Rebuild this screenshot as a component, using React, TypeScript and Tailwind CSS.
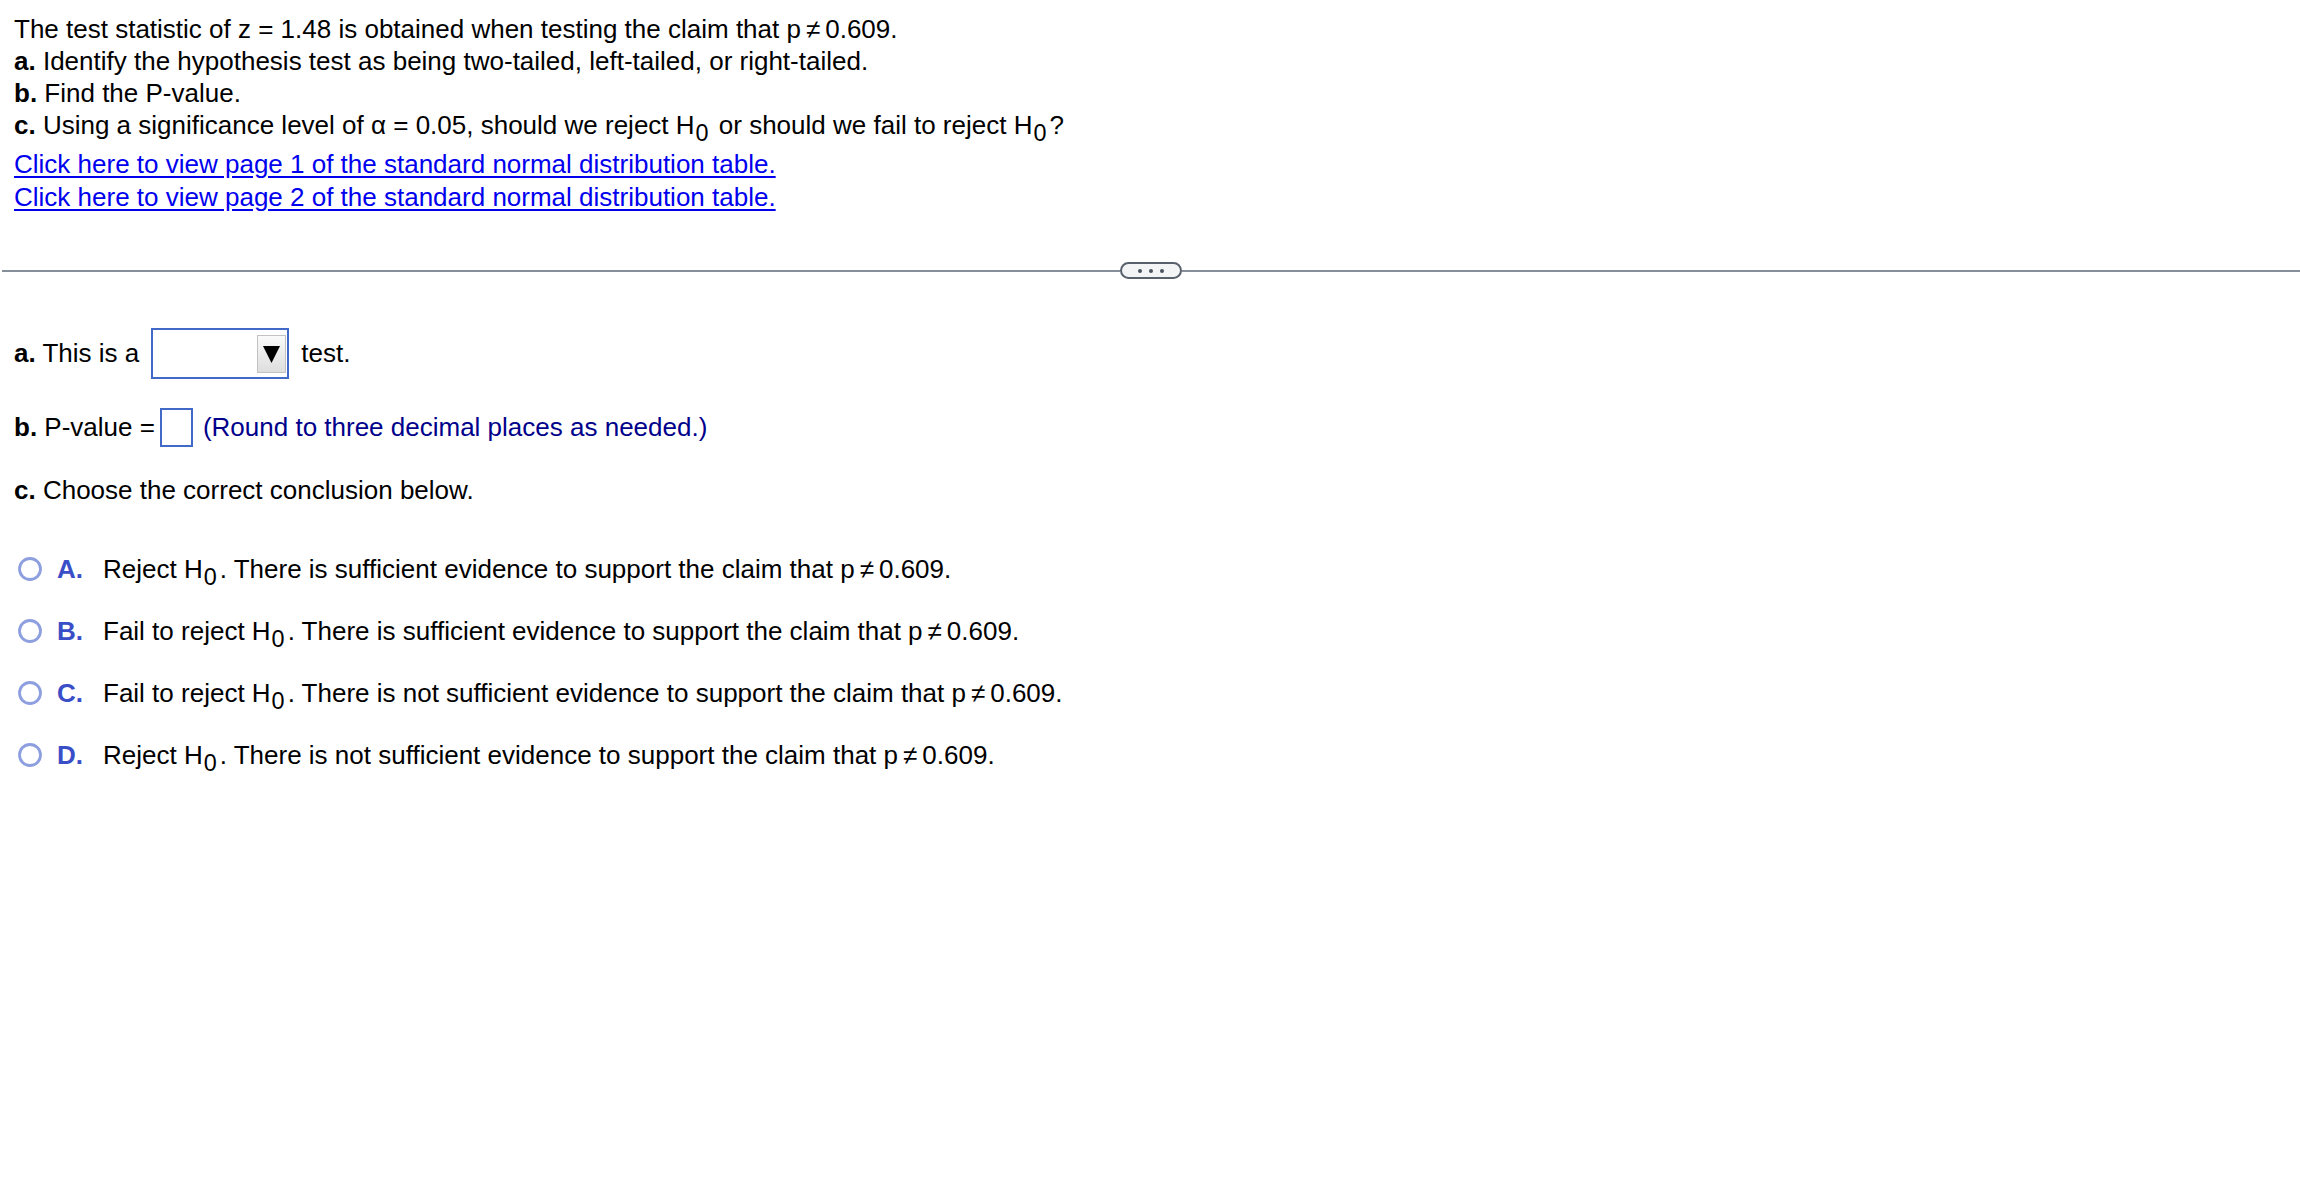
import React from 'react';

const font = { fontFamily: '"Liberation Sans", Arial, sans-serif' };

function H0() {
  return (
    <span>
      H<span className="relative top-[0.32em] ml-[1px] mr-[3px] text-[0.9em] leading-none">0</span>
    </span>
  );
}

function Neq() {
  return <span className="mx-[5px]">≠</span>;
}

function Radio() {
  return (
    <svg width="26" height="26" viewBox="0 0 26 26" className="shrink-0">
      <circle cx="13" cy="13" r="10.5" fill="#fff" stroke="#8e9fe0" strokeWidth="2.8" />
    </svg>
  );
}

const options = [
  { letter: 'A.', pre: 'Reject ', post: '. There is sufficient evidence to support the claim that p' },
  { letter: 'B.', pre: 'Fail to reject ', post: '. There is sufficient evidence to support the claim that p' },
  { letter: 'C.', pre: 'Fail to reject ', post: '. There is not sufficient evidence to support the claim that p' },
  { letter: 'D.', pre: 'Reject ', post: '. There is not sufficient evidence to support the claim that p' },
];

export default function App() {
  return (
    <div className="min-h-screen w-full bg-white text-black text-[26px]" style={font}>
      {/* Question text */}
      <div className="px-[14px] pt-[13px]">
        <div className="leading-[32px]">
          The test statistic of z = 1.48 is obtained when testing the claim that p<Neq />0.609.
        </div>
        <div className="leading-[32px]">
          <b>a.</b> Identify the hypothesis test as being two-tailed, left-tailed, or right-tailed.
        </div>
        <div className="leading-[32px]">
          <b>b.</b> Find the P-value.
        </div>
        <div className="leading-[32px]">
          <b>c.</b> Using a significance level of α = 0.05, should we reject <H0 /> or should we fail to reject <H0 />?
        </div>
        <div className="mt-[7px] flex flex-col items-start leading-[33px]">
          <a href="#" className="text-[#0000ee] underline underline-offset-[3px]">
            Click here to view page 1 of the standard normal distribution table.
          </a>
          <a href="#" className="text-[#0000ee] underline underline-offset-[3px]">
            Click here to view page 2 of the standard normal distribution table.
          </a>
        </div>
      </div>

      {/* Divider */}
      <div className="mt-[48px] flex items-center pl-[2px]">
        <div className="h-[2px] flex-1 bg-[#868e99]" />
        <div className="flex h-[17px] w-[62px] items-center justify-center gap-[7px] rounded-full border-2 border-[#58606c] bg-[#f3f4f6]">
          <span className="h-[4px] w-[4px] rounded-full bg-[#4b5260]" />
          <span className="h-[4px] w-[4px] rounded-full bg-[#4b5260]" />
          <span className="h-[4px] w-[4px] rounded-full bg-[#4b5260]" />
        </div>
        <div className="h-[2px] flex-1 bg-[#868e99]" />
      </div>

      {/* Answers */}
      <div className="px-[14px]">
        <div className="mt-[49px] flex items-center">
          <span>
            <b>a.</b> This is a
          </span>
          <div className="ml-[12px] flex h-[51px] w-[138px] items-center justify-end border-2 border-[#4169c8] bg-white pr-[1px]">
            <div className="flex h-[38px] w-[29px] items-center justify-center border border-[#c2c2c2] bg-gradient-to-b from-[#fafafa] to-[#dedede]">
              <svg width="17" height="18" viewBox="0 0 17 18">
                <polygon points="0,1 17,1 8.5,18" fill="#000" />
              </svg>
            </div>
          </div>
          <span className="ml-[12px]">test.</span>
        </div>

        <div className="mt-[29px] flex items-center">
          <span>
            <b>b.</b> P-value =
          </span>
          <div className="ml-[5px] h-[39px] w-[33px] border-2 border-[#4169c8] bg-white" />
          <span className="ml-[10px] text-[#00008b]">(Round to three decimal places as needed.)</span>
        </div>

        <div className="mt-[27px] leading-[32px]">
          <b>c.</b> Choose the correct conclusion below.
        </div>

        <div className="mt-[47px] flex flex-col gap-[30px]">
          {options.map(o => (
            <div key={o.letter} className="flex items-center leading-[32px]">
              <span className="ml-[3px]">
                <Radio />
              </span>
              <b className="ml-[14px] w-[46px] text-[#3a4ec8]">{o.letter}</b>
              <span>
                {o.pre}
                <H0 />
                {o.post}
                <Neq />
                0.609.
              </span>
            </div>
          ))}
        </div>
      </div>
    </div>
  );
}
